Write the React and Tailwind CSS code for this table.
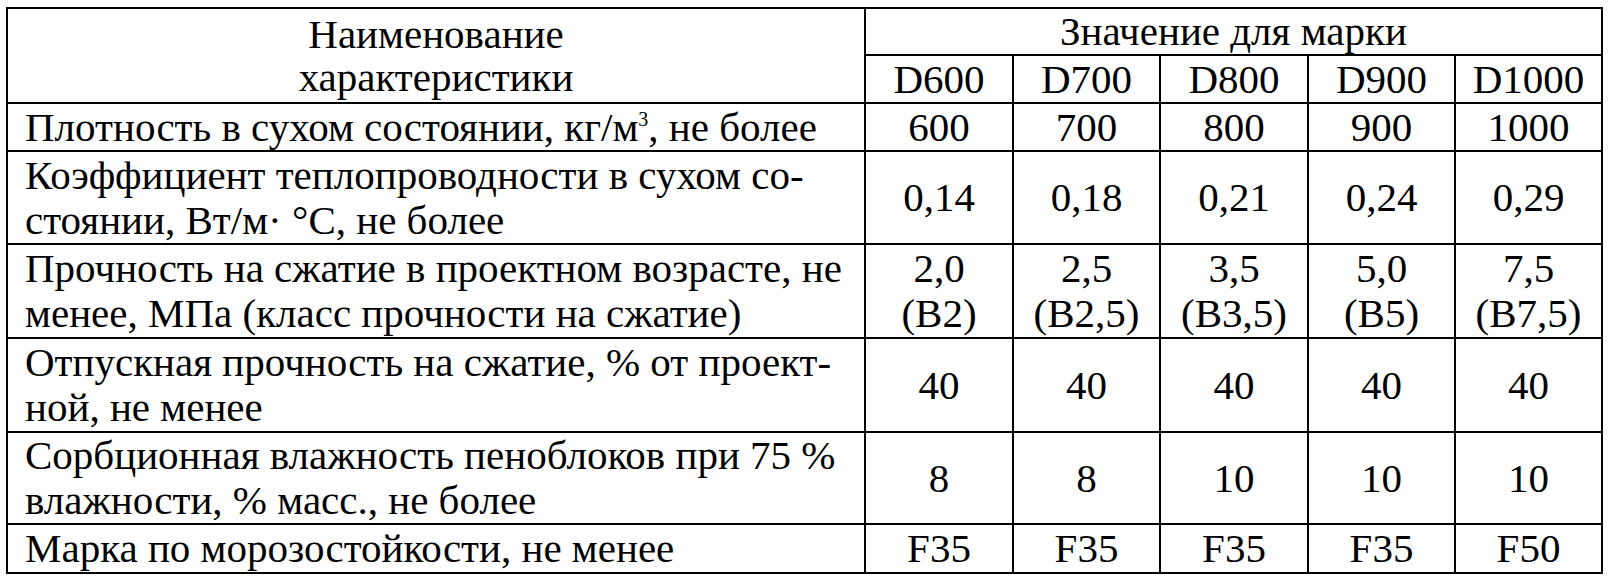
// Таблица характеристик пеноблоков по маркам плотности
import React from "react";

const grades = ["D600", "D700", "D800", "D900", "D1000"];

const rows = [
  {
    lines: [
      <>
        Плотность в сухом состоянии, кг/м
        <sup className="text-[20px] relative -top-[15px]">3</sup>, не более
      </>,
    ],
    values: [["600"], ["700"], ["800"], ["900"], ["1000"]],
    h: "h-[48px]",
  },
  {
    lines: ["Коэффициент теплопроводности в сухом со-", "стоянии, Вт/м· °С, не более"],
    values: [["0,14"], ["0,18"], ["0,21"], ["0,24"], ["0,29"]],
    h: "h-[93px]",
  },
  {
    lines: [
      "Прочность на сжатие в проектном возрасте, не",
      "менее, МПа (класс прочности на сжатие)",
    ],
    values: [
      ["2,0", "(В2)"],
      ["2,5", "(В2,5)"],
      ["3,5", "(В3,5)"],
      ["5,0", "(В5)"],
      ["7,5", "(В7,5)"],
    ],
    h: "h-[94px]",
  },
  {
    lines: ["Отпускная прочность на сжатие, % от проект-", "ной, не менее"],
    values: [["40"], ["40"], ["40"], ["40"], ["40"]],
    h: "h-[94px]",
  },
  {
    lines: ["Сорбционная влажность пеноблоков при 75 %", "влажности, % масс., не более"],
    values: [["8"], ["8"], ["10"], ["10"], ["10"]],
    h: "h-[92px]",
  },
  {
    lines: ["Марка по морозостойкости, не менее"],
    values: [["F35"], ["F35"], ["F35"], ["F35"], ["F50"]],
    h: "h-[49px]",
  },
];

function App() {
  return (
    <div className="w-[1609px] h-[583px] bg-white pl-[6px] pt-[7px] text-black font-[Liberation_Serif,Times_New_Roman,serif] text-[41px] leading-[45px]">
      <table className="border-collapse table-fixed w-[1597px]">
        <colgroup>
          <col className="w-[858px]" />
          <col className="w-[148px]" />
          <col className="w-[147px]" />
          <col className="w-[148px]" />
          <col className="w-[147px]" />
          <col className="w-[147px]" />
        </colgroup>
        <thead>
          <tr className="h-[47px]">
            <th
              rowSpan={2}
              className="border-2 border-black font-normal text-center leading-[43px] align-middle"
            >
              Наименование
              <br />
              характеристики
            </th>
            <th colSpan={5} className="border-2 border-black font-normal text-center">
              Значение для марки
            </th>
          </tr>
          <tr className="h-[48px]">
            {grades.map((g) => (
              <th key={g} className="border-2 border-black font-normal text-center">
                {g}
              </th>
            ))}
          </tr>
        </thead>
        <tbody>
          {rows.map((row, i) => (
            <tr key={i} className={row.h}>
              <td className="border-2 border-black pl-[17px] pr-1 whitespace-nowrap align-middle">
                {row.lines.map((line, j) => (
                  <div key={j}>{line}</div>
                ))}
              </td>
              {row.values.map((v, j) => (
                <td key={j} className="border-2 border-black text-center align-middle whitespace-nowrap">
                  {v.map((t, k) => (
                    <div key={k}>{t}</div>
                  ))}
                </td>
              ))}
            </tr>
          ))}
        </tbody>
      </table>
    </div>
  );
}

export default App;
